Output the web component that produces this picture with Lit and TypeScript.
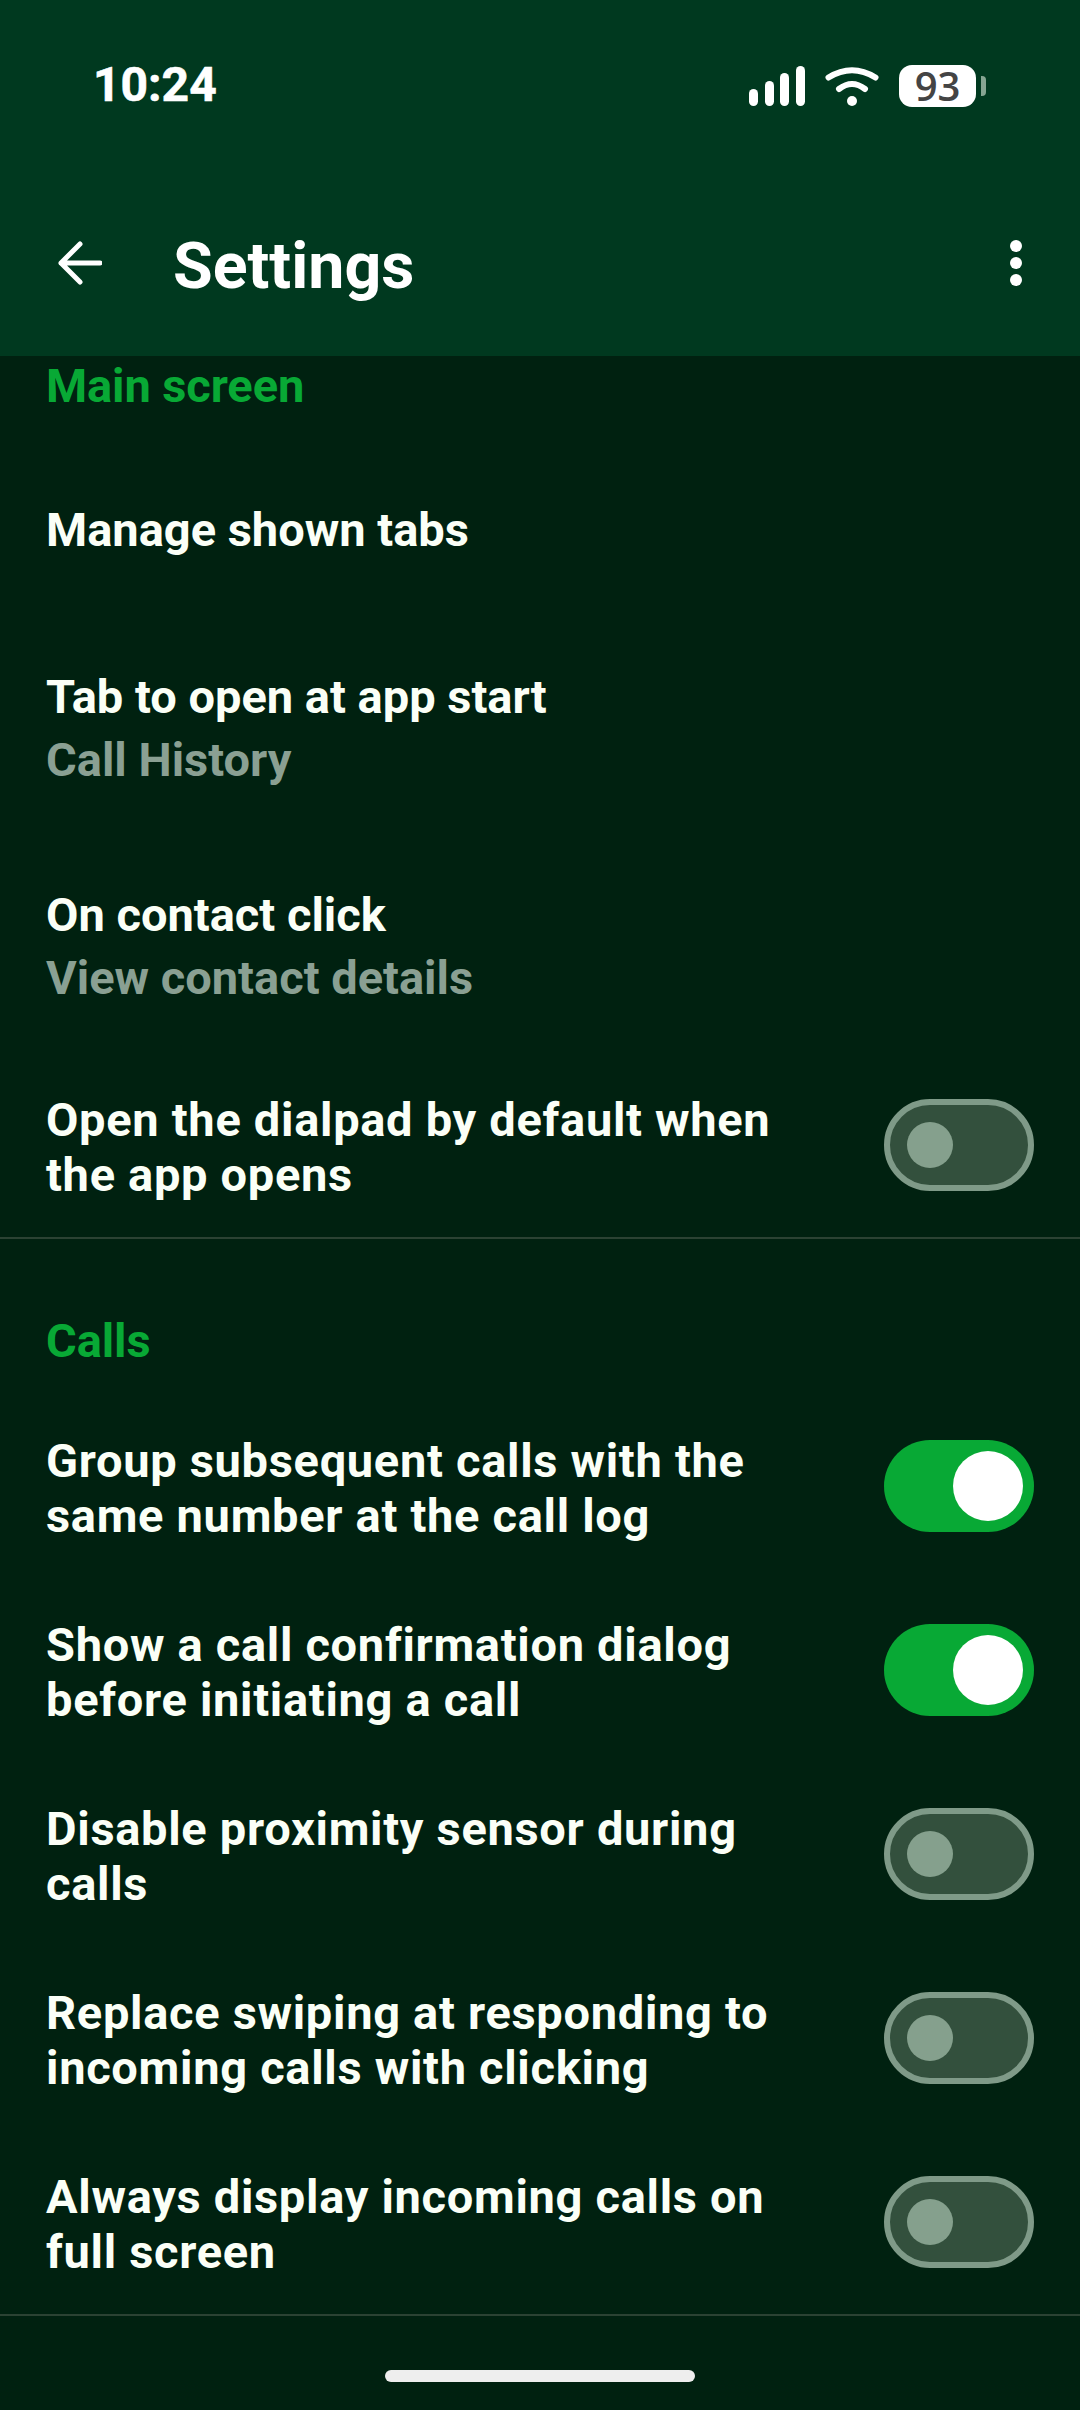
import { LitElement, html, css, svg } from 'lit';
import { customElement, property } from 'lit/decorators.js';

@customElement('app-switch')
export class AppSwitch extends LitElement {
  @property({ type: Boolean }) on = false;

  static override styles = css`
    :host {
      display: block;
      flex: none;
    }
    .track {
      box-sizing: border-box;
      width: 150px;
      height: 92px;
      border-radius: 46px;
      border: 6px solid #7f9a88;
      background: #33503d;
      display: flex;
      align-items: center;
      padding-left: 17px;
    }
    .knob {
      width: 46px;
      height: 46px;
      border-radius: 50%;
      background: #85a08d;
    }
    .track.on {
      border: none;
      background: #08a935;
      padding-left: 69px;
    }
    .track.on .knob {
      width: 70px;
      height: 70px;
      background: #fff;
    }
  `;

  protected override render() {
    return html`<div class="track ${this.on ? 'on' : ''}"><div class="knob"></div></div>`;
  }
}

@customElement('app-root')
export class AppRoot extends LitElement {
  static override styles = css`
    :host {
      display: flex;
      flex-direction: column;
      width: 1080px;
      height: 2410px;
      overflow: hidden;
      background: #002110;
      color: #fff;
      font-family: Roboto, 'Noto Sans', sans-serif;
    }

    .appbar {
      height: 356px;
      flex: none;
      background: #00391f;
      display: flex;
      flex-direction: column;
    }

    .status {
      display: flex;
      align-items: center;
      justify-content: space-between;
      padding: 57px 94px 0 93px;
      height: 56px;
    }

    .time {
      font-size: 48px;
      font-weight: 700;
      line-height: 56px;
      -webkit-text-stroke: 0.6px #fff;
    }

    .status-icons {
      display: flex;
      align-items: center;
      margin-top: 2px;
    }

    .status-icons svg {
      display: block;
    }

    .battery {
      width: 77px;
      height: 42px;
      margin-left: 20px;
      border-radius: 13px;
      background: #fff;
      color: #444;
      font-family: 'Open Sans', sans-serif;
      font-size: 40px;
      font-weight: 600;
      line-height: 42px;
      text-align: center;
    }

    .nub {
      width: 5px;
      height: 20px;
      margin-left: 5px;
      border-radius: 0 4px 4px 0;
      background: #86a592;
    }

    .toolbar {
      display: flex;
      align-items: center;
      height: 84px;
      margin-top: 108px;
      padding: 0 58px 0 58px;
    }

    .title {
      flex: 1;
      margin-left: 71px;
      padding-top: 5px;
      font-size: 64.5px;
      font-weight: 700;
      line-height: 84px;
    }

    main {
      flex: 1;
      min-height: 0;
    }

    section {
      border-bottom: 2px solid #2b4233;
    }

    h2 {
      margin: 0;
      padding: 0 46px;
      color: #08a935;
      font-size: 47px;
      font-weight: 700;
      line-height: 58px;
      letter-spacing: -0.1px;
    }

    .section-first h2 {
      padding-top: 1px;
      margin-bottom: 26px;
    }

    .section-next h2 {
      padding-top: 73px;
      padding-bottom: 24px;
    }

    .row {
      display: flex;
      flex-direction: column;
      justify-content: center;
      padding: 4px 46px 0;
      color: #fbfff7;
      font-size: 47px;
      font-weight: 700;
      line-height: 63px;
      height: 218px;
      box-sizing: border-box;
    }

    .row.single {
      height: 176px;
      padding-top: 0;
    }

    .sub {
      color: #8aa093;
    }

    .row.toggle {
      flex-direction: row;
      align-items: center;
      justify-content: space-between;
      padding-top: 0;
      height: 184px;
      line-height: 55px;
      letter-spacing: 0.7px;
    }

    .toggle-label {
      width: 780px;
      padding-top: 3px;
    }

    .home {
      box-sizing: border-box;
      flex: none;
      height: 95px;
      padding-top: 55px;
      display: flex;
      justify-content: center;
    }

    .home div {
      width: 310px;
      height: 12px;
      border-radius: 6px;
      background: #eee;
    }
  `;

  private _toggle(label: unknown, on = false) {
    return html`
      <div class="row toggle">
        <div class="toggle-label">${label}</div>
        <app-switch ?on=${on}></app-switch>
      </div>
    `;
  }

  protected override render() {
    return html`
      <header class="appbar">
        <div class="status">
          <div class="time">10:24</div>
          <div class="status-icons">
            <svg width="56" height="40" viewBox="0 0 56 40" fill="#fff">
              <rect x="0" y="23" width="9" height="17" rx="4.5" />
              <rect x="16" y="15" width="9" height="25" rx="4.5" />
              <rect x="31" y="7" width="9" height="33" rx="4.5" />
              <rect x="47" y="0" width="9" height="40" rx="4.5" />
            </svg>
            <svg style="margin-left:20px" width="54" height="40" viewBox="0 0 54 40" fill="none" stroke="#fff" stroke-width="6" stroke-linecap="round">
              <path d="M3.5 11.5Q27-3 50.5 11.5" />
              <path d="M14 23Q27 13 40 23" />
              <circle cx="27" cy="35" r="5" fill="#fff" stroke="none" />
            </svg>
            <div class="battery">93</div>
            <div class="nub"></div>
          </div>
        </div>
        <div class="toolbar">
          <svg width="44" height="44" viewBox="0 0 44 44" fill="none" stroke="#fff" stroke-width="5" stroke-linecap="round" stroke-linejoin="round">
            <path d="M42 22H3M22 3 3 22l19 19" />
          </svg>
          <div class="title">Settings</div>
          <svg width="12" height="46" viewBox="0 0 12 46" fill="#fff">
            ${[6, 23, 40].map((cy) => svg`<circle cx="6" cy=${cy} r="6" />`)}
          </svg>
        </div>
      </header>
      <main>
        <section class="section-first">
          <h2>Main screen</h2>
          <div class="row single"><div>Manage shown tabs</div></div>
          <div class="row">
            <div>Tab to open at app start</div>
            <div class="sub">Call History</div>
          </div>
          <div class="row">
            <div>On contact click</div>
            <div class="sub">View contact details</div>
          </div>
          ${this._toggle(html`Open the dialpad by default when<br />the app opens`)}
        </section>
        <section class="section-next">
          <h2>Calls</h2>
          ${this._toggle(html`Group subsequent calls with the<br />same number at the call log`, true)}
          ${this._toggle(html`Show a call confirmation dialog<br />before initiating a call`, true)}
          ${this._toggle(html`Disable proximity sensor during<br />calls`)}
          ${this._toggle(html`Replace swiping at responding to<br />incoming calls with clicking`)}
          ${this._toggle(html`Always display incoming calls on<br />full screen`)}
        </section>
      </main>
      <div class="home"><div></div></div>
    `;
  }
}
